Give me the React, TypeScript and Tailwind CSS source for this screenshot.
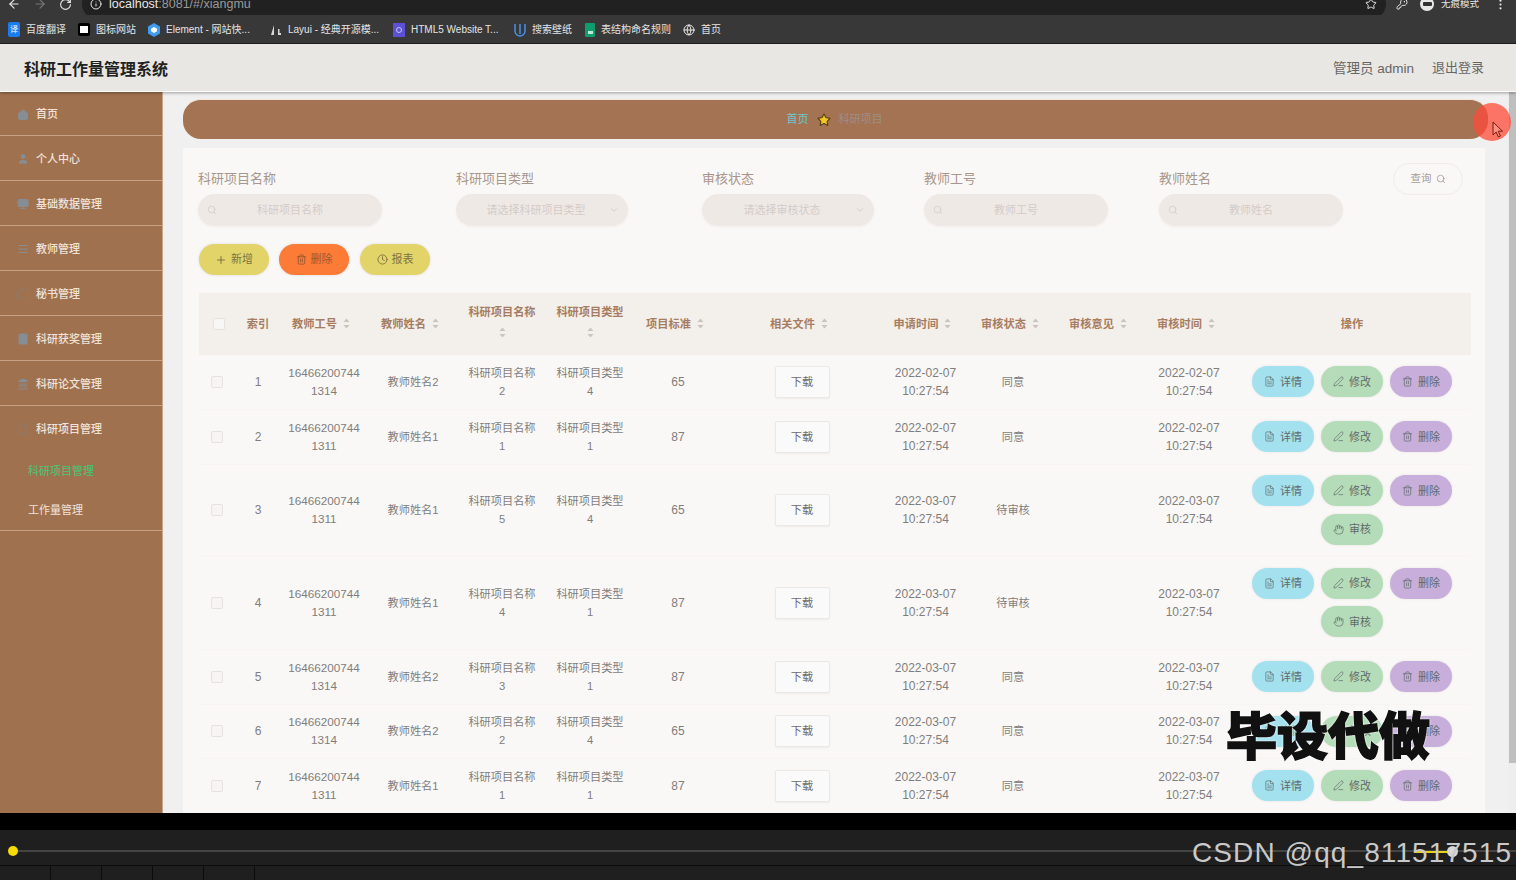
import { ArrowLeft, ArrowRight, ChevronDown, Clock, FileText, Hand, Info, KeyRound, Menu, MoreVertical, PenLine, Plus, RotateCw, Search, Star, Trash2, User, House, Book, Square, Monitor, Landmark, File, Globe } from "lucide-react"

const bookmarks = [
    { label: "百度翻译", width: "w-[70px]", icon: <span className="flex h-[15px] w-[12px] items-center justify-center rounded-[2px] bg-[#1b7cf0] text-[8px] text-white">译</span> },
    { label: "图标网站", width: "w-[70px]", icon: <span className="flex h-[13px] w-[12px] items-center justify-center rounded-[2px] bg-black"><span className="h-[7px] w-[8px] bg-white" /></span> },
    { label: "Element - 网站快...", width: "w-[122px]", icon: <svg width="12" height="14" viewBox="0 0 12 14"><path d="M6 0l6 3.5v7L6 14l-6-3.5v-7z" fill="#3f9cf0" /><path d="M6 4l3 1.7v2.6L6 10 3 8.3V5.7z" fill="#ffffff" /></svg> },
    { label: "Layui - 经典开源模...", width: "w-[123px]", icon: <svg width="12" height="12" viewBox="0 0 12 12"><path d="M4 1v10H1zM8 5v6h3V9H9.5V5z" fill="#d8d8d8" /></svg> },
    { label: "HTML5 Website T...", width: "w-[121px]", icon: <span className="flex h-[14px] w-[12px] items-center justify-center bg-[#5b50d6]"><span className="h-[6px] w-[6px] rounded-full border border-[#c9c4ff]" /></span> },
    { label: "搜索壁纸", width: "w-[71px]", icon: <svg width="12" height="14" viewBox="0 0 12 14"><path d="M1 1v7a5 5 0 0 0 10 0V1M6 1v10" fill="none" stroke="#4a8fe8" strokeWidth="1.5" /></svg> },
    { label: "表结构命名规则", width: "w-[98px]", icon: <span className="flex h-[14px] w-[10px] items-end justify-center rounded-[1px] bg-[#0f9d6e] pb-[3px]"><span className="h-[3px] w-[5px] bg-[#bfe8d8]" /></span> },
    { label: "首页", width: "w-[50px]", icon: <Globe size={12} color="#e8e8e8" /> },
]

const sideItems = [
    { label: "首页", icon: <House size={12} fill="#878d94" stroke="#878d94" />, height: "h-[44px]" },
    { label: "个人中心", icon: <User size={12} fill="#878d94" stroke="#878d94" />, height: "h-[45px]" },
    { label: "基础数据管理", icon: <Monitor size={12} fill="#878d94" stroke="#878d94" />, height: "h-[45px]" },
    { label: "教师管理", icon: <Menu size={12} stroke="#878d94" />, height: "h-[45px]" },
    { label: "秘书管理", icon: <Square size={12} stroke="#8f7a6a" />, height: "h-[45px]" },
    { label: "科研获奖管理", icon: <Book size={12} fill="#878d94" stroke="#878d94" />, height: "h-[45px]" },
    { label: "科研论文管理", icon: <Landmark size={12} fill="#878d94" stroke="#878d94" />, height: "h-[45px]" },
]

const filters = [
    { label: "科研项目名称", placeholder: "科研项目名称", box: "w-[184px]", gap: "", select: false },
    { label: "科研项目类型", placeholder: "请选择科研项目类型", box: "w-[172px]", gap: "ml-[74px]", select: true },
    { label: "审核状态", placeholder: "请选择审核状态", box: "w-[172px]", gap: "ml-[74px]", select: true },
    { label: "教师工号", placeholder: "教师工号", box: "w-[184px]", gap: "ml-[50px]", select: false },
    { label: "教师姓名", placeholder: "教师姓名", box: "w-[184px]", gap: "ml-[51px]", select: false },
]

const columns = [
    { label: "", width: "w-[37px]", sort: false },
    { label: "索引", width: "w-[44px]", sort: false },
    { label: "教师工号", width: "w-[88px]", sort: true },
    { label: "教师姓名", width: "w-[90px]", sort: true },
    { label: "科研项目名称", width: "w-[88px]", sort: true },
    { label: "科研项目类型", width: "w-[88px]", sort: true },
    { label: "项目标准", width: "w-[88px]", sort: true },
    { label: "相关文件", width: "w-[160px]", sort: true },
    { label: "申请时间", width: "w-[87px]", sort: true },
    { label: "审核状态", width: "w-[88px]", sort: true },
    { label: "审核意见", width: "w-[88px]", sort: true },
    { label: "审核时间", width: "w-[88px]", sort: true },
    { label: "操作", width: "w-[238px]", sort: false },
]

const rows = [
    { id: 1, code: "1314", teacher: "教师姓名2", name: "2", type: "4", score: 65, date: "2022-02-07", status: "同意", height: "h-[54px]" },
    { id: 2, code: "1311", teacher: "教师姓名1", name: "1", type: "1", score: 87, date: "2022-02-07", status: "同意", height: "h-[55px]" },
    { id: 3, code: "1311", teacher: "教师姓名1", name: "5", type: "4", score: 65, date: "2022-03-07", status: "待审核", height: "h-[92px]" },
    { id: 4, code: "1311", teacher: "教师姓名1", name: "4", type: "1", score: 87, date: "2022-03-07", status: "待审核", height: "h-[93px]" },
    { id: 5, code: "1314", teacher: "教师姓名2", name: "3", type: "1", score: 87, date: "2022-03-07", status: "同意", height: "h-[55px]" },
    { id: 6, code: "1314", teacher: "教师姓名2", name: "2", type: "4", score: 65, date: "2022-03-07", status: "同意", height: "h-[54px]" },
    { id: 7, code: "1311", teacher: "教师姓名1", name: "1", type: "1", score: 87, date: "2022-03-07", status: "同意", height: "h-[55px]" },
]

function SortCaret() {
    return (
        <svg className="mx-[6px] inline-block align-[-1px]" width="7" height="11" viewBox="0 0 7 11">
            <path d="M3.5 0.5L6.5 4H0.5z M3.5 10.5L0.5 7H6.5z" fill="#c9c4c0" />
        </svg>
    )
}

function RowButton({ color, icon, label }: { color: string; icon: React.ReactNode; label: string }) {
    return (
        <button className={`flex h-[31px] w-[62px] items-center justify-center gap-[5px] rounded-full text-[11px] text-[#5f6b6b] shadow-[0_0_3px_rgba(0,0,0,0.08)] ${color}`}>
            {icon}
            {label}
        </button>
    )
}

function BrowserBar() {
    return (
        <div className="h-[44px] shrink-0 bg-[#383838]">
            {/* Address row, cut off by the video frame */}
            <div className="h-[15px] overflow-hidden">
                <div className="-mt-[4px] flex h-[16px] items-center text-[#e6e6e6]">
                    <ArrowLeft size={14} className="ml-[7px]" />
                    <ArrowRight size={14} className="ml-[12px] text-[#777777]" />
                    <RotateCw size={13} className="ml-[12px]" />
                    <div className="ml-[10px] flex h-[30px] w-[1304px] items-center rounded-[15px] bg-[#212121] pl-[8px]">
                        <Info size={12} />
                        <span className="ml-[7px] text-[12.5px]">localhost</span>
                        <span className="text-[12.5px] text-[#9a9a9a]">:8081/#/xiangmu</span>
                        <Star size={12} className="ml-auto mr-[9px]" />
                    </div>
                    <KeyRound size={12} className="ml-[10px]" />
                    <span className="ml-[12px] flex h-[14px] w-[14px] items-center justify-center rounded-full bg-[#e8e8e8] text-[#333333]">
                        <span className="h-[4px] w-[9px] rounded-[1px] bg-[#333333]" />
                    </span>
                    <span className="ml-[7px] text-[9.5px]">无痕模式</span>
                    <MoreVertical size={13} className="ml-[15px]" />
                </div>
            </div>

            {/* Bookmarks */}
            <div className="flex h-[29px] items-center border-b border-[#1e1e1e] pl-[8px] pt-[1px] text-[10px] text-[#e4e4e4]">
                {bookmarks.map((b) => (
                    <div key={b.label} className={`flex items-center gap-[6px] ${b.width}`}>
                        {b.icon}
                        <span className="whitespace-nowrap">{b.label}</span>
                    </div>
                ))}
            </div>
        </div>
    )
}

function Sidebar() {
    return (
        <aside className="w-[163px] shrink-0 border-r border-[#c9a58a] bg-[#a0714e] text-[11px] font-medium text-[#f0e3d9]">
            {sideItems.map((item) => (
                <div key={item.label} className={`flex items-center border-b border-[#c9a184] pl-[17px] pt-[2px] ${item.height}`}>
                    {item.icon}
                    <span className="ml-[7px]">{item.label}</span>
                </div>
            ))}
            <div className="border-b border-[#c9a184]">
                <div className="flex h-[44px] items-center pl-[17px] pt-[2px]">
                    <File size={12} stroke="#8f7a6a" />
                    <span className="ml-[7px]">科研项目管理</span>
                </div>
                <div className="flex h-[40px] items-center pl-[28px] pt-[2px] text-[#52bd72]">科研项目管理</div>
                <div className="flex h-[40px] items-center pl-[28px] font-normal">工作量管理</div>
            </div>
        </aside>
    )
}

function SearchForm() {
    return (
        <div className="flex pl-[15px] pt-[15px]">
            {filters.map((f) => (
                <div key={f.label} className={f.gap}>
                    <div className="flex h-[31px] items-center pt-[1px] text-[13px] text-[#a8968c]">{f.label}</div>
                    <div className={`relative flex h-[32px] items-center justify-center rounded-full bg-[#efe9e6] text-[11px] text-[#d3cbc6] shadow-[0_1px_3px_rgba(0,0,0,0.04)] ${f.box}`}>
                        {!f.select && <Search size={10} className="absolute left-[9px] text-[#d4ccc8]" />}
                        <span className={f.select ? "-ml-[12px]" : ""}>{f.placeholder}</span>
                        {f.select && <ChevronDown size={10} className="absolute right-[9px] text-[#cfc6c1]" />}
                    </div>
                </div>
            ))}
            <button className="ml-[50px] flex h-[32px] w-[70px] items-center justify-center gap-[4px] rounded-full border border-[#efeceb] text-[10.5px] text-[#a89c95]">
                查询
                <Search size={10} />
            </button>
        </div>
    )
}

function ToolButtons() {
    return (
        <div className="ml-[16px] mt-[18px] flex gap-[10px] text-[11px] text-[#7d7340]">
            <button className="flex h-[31px] w-[70px] items-center justify-center gap-[4px] rounded-full bg-[#e3d46a] shadow-[0_0_3px_rgba(0,0,0,0.12)]">
                <Plus size={12} />
                新增
            </button>
            <button className="flex h-[31px] w-[70px] items-center justify-center gap-[4px] rounded-full bg-[#fc7b37] text-[#9a5a30] shadow-[0_0_3px_rgba(0,0,0,0.12)]">
                <Trash2 size={11} />
                删除
            </button>
            <button className="ml-[1px] flex h-[31px] w-[70px] items-center justify-center gap-[4px] rounded-full bg-[#e3d46a] shadow-[0_0_3px_rgba(0,0,0,0.12)]">
                <Clock size={11} />
                报表
            </button>
        </div>
    )
}

function DataTable() {
    return (
        <table className="ml-[16px] mt-[18px] w-[1272px] table-fixed border-collapse text-center text-[11.2px] text-[#807e7c]">
            <colgroup>
                {columns.map((c) => (
                    <col key={c.label} className={c.width} />
                ))}
            </colgroup>
            <thead>
                <tr className="h-[62px] bg-[#f3efeb] text-[#a67d62]">
                    {columns.map((c, i) => (
                        <th key={c.label} className={`px-[10px] font-bold leading-[21px] ${c.label.length > 4 ? "pb-[3px]" : ""}`}>
                            {i === 0 && <span className="ml-[4px] block h-[12px] w-[12px] rounded-[2px] border border-[#e6e2df] bg-[#f9f7f5]" />}
                            {c.label}
                            {c.sort && <SortCaret />}
                        </th>
                    ))}
                </tr>
            </thead>
            <tbody className="leading-[18px]">
                {rows.map((r) => (
                    <tr key={r.id} className={`border-b border-[#f7f4f2] ${r.height}`}>
                        <td>
                            <span className="ml-[12px] block h-[12px] w-[12px] rounded-[2px] border border-[#e6e2df] bg-[#f7f5f3]" />
                        </td>
                        <td className="text-[12px]">{r.id}</td>
                        <td className="text-[11.7px]">
                            16466200744
                            <br />
                            {r.code}
                        </td>
                        <td>{r.teacher}</td>
                        <td className="px-[10px]">科研项目名称 {r.name}</td>
                        <td className="px-[10px]">科研项目类型 {r.type}</td>
                        <td className="text-[12px]">{r.score}</td>
                        <td>
                            <button className="mx-auto block h-[32px] w-[55px] rounded-[2px] border border-[#ebe9e8] bg-[#fafafa] text-[11.2px] text-[#6f6c6a] shadow-[0_1px_2px_rgba(0,0,0,0.05)]">下载</button>
                        </td>
                        <td className="px-[10px] text-[12px]">{r.date} 10:27:54</td>
                        <td>{r.status}</td>
                        <td />
                        <td className="px-[10px] text-[12px]">{r.date} 10:27:54</td>
                        <td>
                            <div className="mx-auto flex w-[200px] flex-wrap justify-center gap-x-[7px] gap-y-[7.5px]">
                                <RowButton color="bg-[#a3e1ee]" icon={<FileText size={11} strokeWidth={1.5} />} label="详情" />
                                <RowButton color="bg-[#b5dcb8]" icon={<PenLine size={11} strokeWidth={1.5} />} label="修改" />
                                <RowButton color="bg-[#c8aedb]" icon={<Trash2 size={11} strokeWidth={1.5} />} label="删除" />
                                {r.status === "待审核" && <RowButton color="bg-[#b5dcb8]" icon={<Hand size={11} strokeWidth={1.5} />} label="审核" />}
                            </div>
                        </td>
                    </tr>
                ))}
            </tbody>
        </table>
    )
}

function VideoBar() {
    return (
        <div className="h-[50px] shrink-0 bg-[#1f1f1f]">
            <div className="flex h-[35px] items-center pl-[8px] pt-[7px]">
                <span className="h-[10px] w-[10px] shrink-0 rounded-full bg-[#f5dc00]" />
                <div className="h-[2px] flex-1 bg-[#444444]" />
            </div>
            <div className="flex h-[15px] border-t border-[#0c0c0c]">
                {[0, 1, 2, 3, 4].map((n) => (
                    <div key={n} className="w-[51px] border-r border-[#0c0c0c]" />
                ))}
            </div>
        </div>
    )
}

export default function App() {
    return (
        <div className="relative flex h-[880px] w-[1516px] flex-col overflow-hidden bg-black font-['Liberation_Sans','Noto_Sans_CJK_SC',sans-serif]">
            <BrowserBar />

            {/* App header */}
            <header className="z-10 flex h-[48px] shrink-0 items-center border-b border-white bg-[#e8e7e3] pl-[24px] pr-[32px] shadow-[0_1px_3px_rgba(0,0,0,0.35)]">
                <div className="mr-auto mt-[5px] text-[16px] font-bold text-[#222222]">科研工作量管理系统</div>
                <div className="mt-[3px] text-[13.5px] text-[#666666]">管理员 admin</div>
                <div className="ml-[18px] mt-[1px] text-[13px] text-[#666666]">退出登录</div>
            </header>

            <div className="flex h-[721px] shrink-0 overflow-hidden bg-[#f0f0f0]">
                <Sidebar />

                <main className="flex-1 pl-[20px]">
                    {/* Breadcrumb */}
                    <div className="mr-[20px] mt-[7px] flex h-[40px] items-center justify-center gap-[8px] rounded-[18px] border-t border-[#f3e6dc] bg-[#a37353] pr-[2px] text-[11px]">
                        <span className="text-[#6fc8d0]">首页</span>
                        <Star size={14} fill="#f0c820" stroke="#5a4010" />
                        <span className="text-[#9d8e86]">科研项目</span>
                    </div>

                    <section className="mr-[23px] mt-[9px] h-[700px] bg-[#faf8f7]">
                        <SearchForm />
                        <ToolButtons />
                        <DataTable />
                    </section>
                </main>

                {/* Page scrollbar */}
                <div className="w-[8px] shrink-0 bg-[#eeeeee] pl-[1px]">
                    <div className="h-[671px] bg-[#bfbfbf]" />
                </div>
            </div>

            <div className="h-[17px] shrink-0 bg-black" />
            <VideoBar />

            {/* Recording cursor highlight */}
            <div className="absolute left-[1473px] top-[103px] h-[38px] w-[38px] rounded-full bg-[#ff4a38]/75" />
            <svg className="absolute left-[1492px] top-[121px]" width="12" height="17" viewBox="0 0 12 17">
                <path d="M1 1v13l3.2-3 2.2 5 2-1-2.2-4.8H10.5z" fill="#ff8f80" stroke="#7a1a10" strokeWidth="1" />
            </svg>

            {/* Video overlays */}
            <div className="absolute left-[1226px] top-[698px] whitespace-nowrap font-['Noto_Sans_CJK_SC',sans-serif] text-[51px] font-black leading-[70px] text-[#111111] [-webkit-text-stroke:1.5px_#111111] [filter:drop-shadow(0_0_1px_#ffffff)]">毕设代做</div>
            <div className="absolute left-[1414px] top-[851px] h-[2px] w-[38px] bg-[#e8d020]" />
            <div className="absolute left-[1447px] top-[846px] h-[11px] w-[11px] rounded-full bg-[#d8d8d8]" />
            <div className="absolute left-[1192px] top-[833px] whitespace-nowrap text-[28px] leading-[40px] tracking-[1.1px] text-[#c9c9c9]">CSDN @qq_811517515</div>
        </div>
    )
}
